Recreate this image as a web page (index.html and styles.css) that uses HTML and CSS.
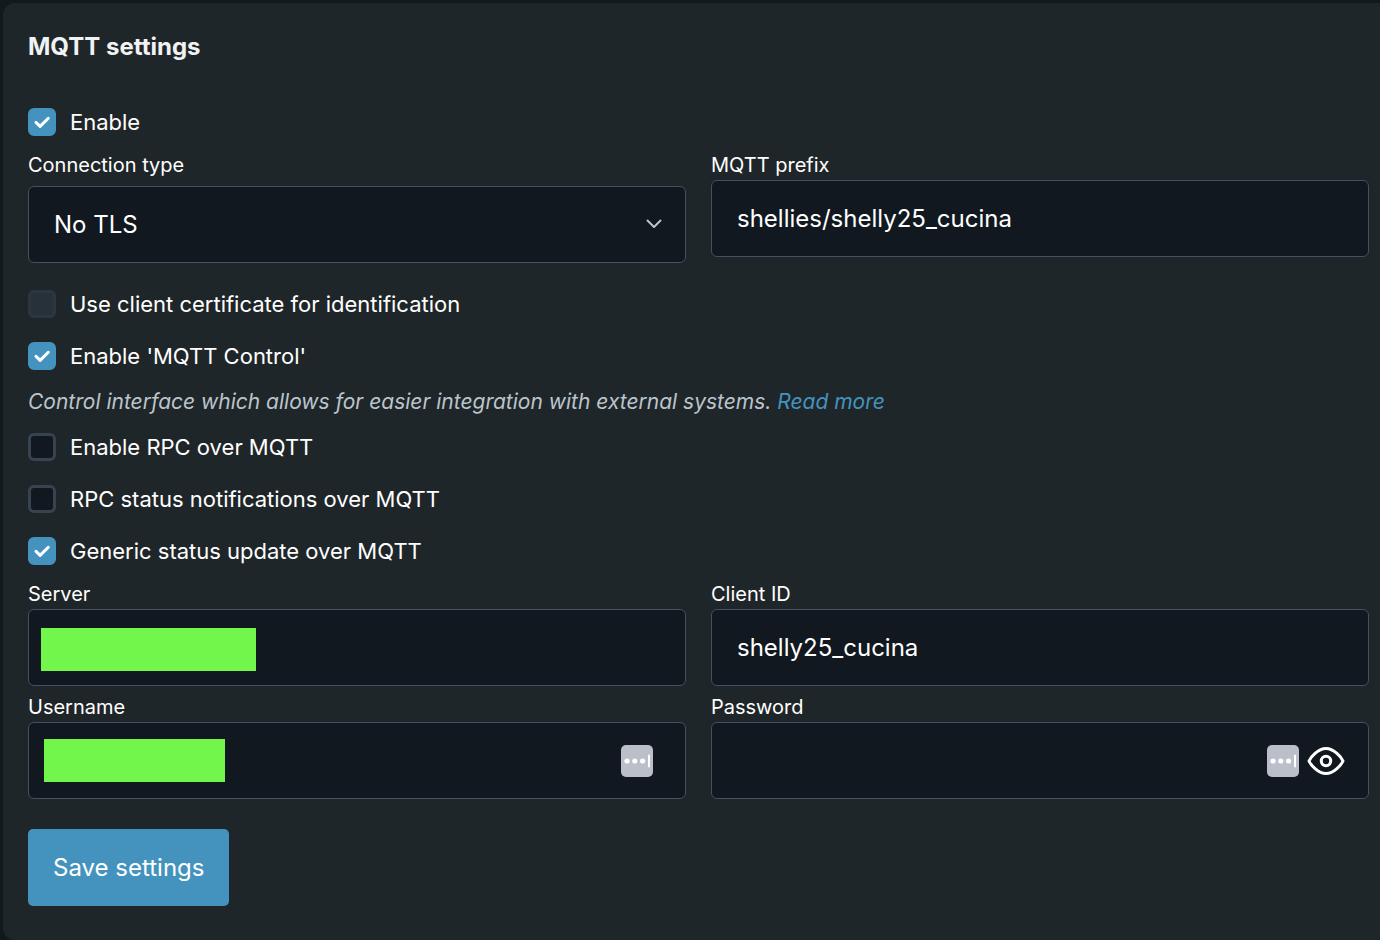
FILE: index.html
```html
<!DOCTYPE html>
<html lang="en">
<head>
<meta charset="utf-8">
<meta name="viewport" content="width=device-width, initial-scale=1">
<title>MQTT settings</title>
<link rel="stylesheet" href="styles.css">
</head>
<body>
<main class="card">
  <h1 class="title">MQTT settings</h1>
  <form class="form">
    <label class="check"><span class="box"><input type="checkbox" checked><svg class="tick" viewBox="0 0 28 28" aria-hidden="true"><path d="M8 14.400l4.100 4 8.200-8.100"/></svg></span>Enable</label>
    <div class="columns connection">
      <div class="field">
        <label class="label label-spaced" for="connection">Connection type</label>
        <div class="control">
          <select class="input" id="connection"><option>No TLS</option></select>
          <svg class="chevron" viewBox="0 0 16 10" aria-hidden="true"><path d="M1.500 1.500L8 8l6.500-6.500"/></svg>
        </div>
      </div>
      <div class="field">
        <label class="label" for="prefix">MQTT prefix</label>
        <input class="input" id="prefix" type="text" value="shellies/shelly25_cucina">
      </div>
    </div>
    <label class="check"><span class="box"><input type="checkbox" disabled></span>Use client certificate for identification</label>
    <label class="check"><span class="box"><input type="checkbox" checked><svg class="tick" viewBox="0 0 28 28" aria-hidden="true"><path d="M8 14.400l4.100 4 8.200-8.100"/></svg></span>Enable 'MQTT Control'</label>
    <p class="hint">Control interface which allows for easier integration with external systems. <a href="#">Read more</a></p>
    <label class="check"><span class="box"><input type="checkbox"></span>Enable RPC over MQTT</label>
    <label class="check"><span class="box"><input type="checkbox"></span>RPC status notifications over MQTT</label>
    <label class="check"><span class="box"><input type="checkbox" checked><svg class="tick" viewBox="0 0 28 28" aria-hidden="true"><path d="M8 14.400l4.100 4 8.200-8.100"/></svg></span>Generic status update over MQTT</label>
    <div class="columns account">
      <div class="field">
        <label class="label" for="server">Server</label>
        <div class="control"><input class="input" id="server" type="text"><span class="mask mask-server"></span></div>
      </div>
      <div class="field">
        <label class="label" for="client">Client ID</label>
        <input class="input" id="client" type="text" value="shelly25_cucina">
      </div>
      <div class="field">
        <label class="label" for="username">Username</label>
        <div class="control">
          <input class="input" id="username" type="text"><span class="mask mask-user"></span>
          <div class="tools tools-user">
            <button class="tool" type="button" aria-label="Fill username"><svg class="filler" viewBox="0 0 32 32"><rect width="32" height="32" rx="5" fill="#bbbfca"/><g fill="#fff"><circle cx="6" cy="16" r="2.600"/><circle cx="13.800" cy="16" r="2.600"/><circle cx="21.600" cy="16" r="2.600"/><rect x="27" y="9.500" width="2" height="13" rx="1"/></g></svg></button>
          </div>
        </div>
      </div>
      <div class="field">
        <label class="label" for="password">Password</label>
        <div class="control">
          <input class="input" id="password" type="password">
          <div class="tools">
            <button class="tool" type="button" aria-label="Fill password"><svg class="filler" viewBox="0 0 32 32"><rect width="32" height="32" rx="5" fill="#bbbfca"/><g fill="#fff"><circle cx="6" cy="16" r="2.600"/><circle cx="13.800" cy="16" r="2.600"/><circle cx="21.600" cy="16" r="2.600"/><rect x="27" y="9.500" width="2" height="13" rx="1"/></g></svg></button>
            <button class="tool" type="button" aria-label="Show password"><svg class="eye" viewBox="0 0 38 30"><path d="M2 15C3.500 11.500 11 2.500 19 2.500S34.500 11.500 36 15C34.500 18.500 27 27.500 19 27.500S3.500 18.500 2 15z"/><circle cx="19" cy="15" r="4.700"/></svg></button>
          </div>
        </div>
      </div>
    </div>
    <button class="save" type="button">Save settings</button>
  </form>
</main>
</body>
</html>
```

FILE: styles.css
```css
* { box-sizing: border-box; }

body {
  margin: 0;
  padding: 3px 0 0 3px;
  background: #11191c;
  color: #fff;
  font-family: Inter, "Liberation Sans", sans-serif;
}

.card {
  padding: 25px 11px 34px 25px;
  border-radius: 12px 0 0 12px;
  background: #1f2629;
}

.title {
  margin: 0 0 30px;
  color: #f0f2f4;
  font-size: 24px;
  line-height: 38px;
  font-weight: 700;
}

.form {
  display: flex;
  flex-direction: column;
}

.check {
  display: flex;
  align-items: center;
  align-self: flex-start;
  gap: 14px;
  height: 52px;
  font-size: 22px;
}

.box {
  display: grid;
  width: 28px;
  height: 28px;
}

.box > * { grid-area: 1 / 1; }

.box input {
  appearance: none;
  width: 28px;
  height: 28px;
  margin: 0;
  border: 3px solid #374450;
  border-radius: 6px;
  background: #11181f;
}

.box input:checked {
  border-color: #4493be;
  background: #4493be;
}

.box input:disabled {
  border-color: #2b363f;
  background: #26313a;
}

.tick {
  width: 28px;
  height: 28px;
  fill: none;
  stroke: #fff;
  stroke-width: 3;
  stroke-linecap: round;
  stroke-linejoin: round;
  pointer-events: none;
}

.columns {
  display: grid;
  grid-template-columns: 1fr 1fr;
  align-items: start;
  column-gap: 25px;
}

.connection {
  padding: 3px 0 15px;
}

.account {
  padding: 3px 0 30px;
  row-gap: 7px;
}

.label {
  display: block;
  font-size: 20px;
  line-height: 29px;
}

.label-spaced { margin-bottom: 6px; }

.control { position: relative; }

.input {
  display: block;
  appearance: none;
  width: 100%;
  height: 77px;
  margin: 0;
  padding: 0 25px;
  border: 1px solid #415261;
  border-radius: 6px;
  background: #11181f;
  color: #fff;
  font: 24px Inter, "Liberation Sans", sans-serif;
}

.chevron {
  position: absolute;
  top: 33px;
  right: 24px;
  width: 16px;
  height: 10px;
  fill: none;
  stroke: #bbc4cc;
  stroke-width: 2;
  stroke-linecap: round;
  stroke-linejoin: round;
  pointer-events: none;
}

.mask {
  position: absolute;
  background: #73f64b;
}

.mask-server {
  top: 19px;
  left: 13px;
  width: 215px;
  height: 43px;
}

.mask-user {
  top: 17px;
  left: 16px;
  width: 181px;
  height: 43px;
}

.tools {
  position: absolute;
  top: 0;
  right: 24px;
  bottom: 0;
  display: flex;
  align-items: center;
  gap: 8px;
}

.tools-user { right: 33px; }

.tool {
  padding: 0;
  border: 0;
  background: none;
}

.tool svg { display: block; }

.filler {
  width: 32px;
  height: 32px;
}

.eye {
  width: 38px;
  height: 30px;
  fill: none;
  stroke: #fff;
  stroke-width: 3;
  stroke-linejoin: round;
}

.hint {
  margin: 0;
  color: #bbc4cc;
  font-size: 21px;
  line-height: 39px;
  font-style: italic;
}

.hint a {
  color: #4493be;
  text-decoration: none;
}

.save {
  align-self: flex-start;
  height: 77px;
  padding: 0 25px;
  border: 0;
  border-radius: 5px;
  background: #4493be;
  color: #fff;
  font: 24px Inter, "Liberation Sans", sans-serif;
}
```
